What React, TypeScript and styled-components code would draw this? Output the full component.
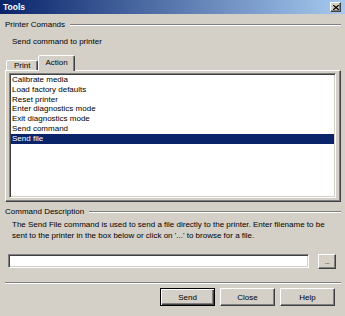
import React from "react";
import styled, { createGlobalStyle } from "styled-components";

const GlobalStyle = createGlobalStyle`
  html, body {
    margin: 0;
    padding: 0;
    background: #d4d0c8;
  }

  body {
    font-family: "Liberation Sans", Arial, sans-serif;
    font-size: 8px;
    color: #000;
  }

  * {
    box-sizing: border-box;
  }
`;

const commands = [
    "Calibrate media",
    "Load factory defaults",
    "Reset printer",
    "Enter diagnostics mode",
    "Exit diagnostics mode",
    "Send command",
    "Send file",
];

export default function App() {
    const selected = "Send file";

    return (
        <Window>
            <GlobalStyle />
            <TitleBar>
                <Title>Tools</Title>
                <CloseBox>
                    <svg width="6" height="5" viewBox="0 0 6 5">
                        <path d="M0 0 L6 5 M6 0 L0 5" stroke="#000" strokeWidth="1.3" />
                    </svg>
                </CloseBox>
            </TitleBar>

            <Content>
                <GroupHeader>
                    <span>Printer Comands</span>
                    <Etch />
                </GroupHeader>
                <Subtitle>Send command to printer</Subtitle>

                <TabStrip>
                    <Tab>Print</Tab>
                    <Tab $active>Action</Tab>
                </TabStrip>
                <TabPanel>
                    <ListBox>
                        {commands.map((c) => (
                            <ListItem key={c} $selected={c === selected}>
                                {c}
                            </ListItem>
                        ))}
                    </ListBox>
                </TabPanel>

                <DescHeader>
                    <span>Command Description</span>
                    <Etch />
                </DescHeader>
                <Description>
                    The Send File command is used to send a file directly to the printer. Enter filename to be
                    <br />
                    sent to the printer in the box below or click on '...' to browse for a file.
                </Description>

                <FileRow>
                    <FileInput />
                    <BrowseButton>...</BrowseButton>
                </FileRow>

                <Separator />

                <ButtonRow>
                    <Button $default>Send</Button>
                    <Button>Close</Button>
                    <Button>Help</Button>
                </ButtonRow>
            </Content>
        </Window>
    );
}

const Window = styled.div`
    width: 345px;
    height: 316px;

    display: flex;
    flex-direction: column;

    overflow: hidden;
    background: #d4d0c8;
`;

const TitleBar = styled.div`
    height: 14px;

    display: flex;
    align-items: center;
    justify-content: space-between;

    padding: 0 4px 0 3px;
    background: linear-gradient(to right, #0a246a, #a6caf0);
`;

const Title = styled.span`
    color: #fff;
    font-size: 8.5px;
    font-weight: 700;
    line-height: 100%;
`;

const CloseBox = styled.div`
    width: 11px;
    height: 10px;

    display: flex;
    align-items: center;
    justify-content: center;

    background: #d4d0c8;
    border: 1px solid;
    border-color: #fff #404040 #404040 #fff;
    box-shadow: inset -1px -1px #808080;
`;

const Content = styled.div`
    flex: 1;

    display: flex;
    flex-direction: column;

    padding: 6px 4px 0 5px;
`;

const GroupHeader = styled.div`
    height: 10px;

    display: flex;
    align-items: center;
    gap: 5px;

    line-height: 10px;
    white-space: nowrap;
`;

const DescHeader = styled(GroupHeader)`
    margin-top: 5px;
`;

const Etch = styled.div`
    flex: 1;
    height: 0;

    border-top: 1px solid #808080;
    border-bottom: 1px solid #fff;
`;

const Subtitle = styled.div`
    margin: 7px 0 0 7px;
    line-height: 10px;
`;

const TabStrip = styled.div`
    display: flex;
    align-items: flex-end;

    margin-top: 8px;
    padding-left: 1px;
`;

const Tab = styled.div<{ $active?: boolean }>`
    position: relative;
    z-index: ${(p) => (p.$active ? 1 : 0)};

    height: ${(p) => (p.$active ? "16px" : "10px")};
    margin-bottom: ${(p) => (p.$active ? "-1px" : "0")};
    padding: ${(p) => (p.$active ? "1px 6px 0" : "0 7px")};

    line-height: ${(p) => (p.$active ? "12px" : "10px")};

    background: #d4d0c8;
    border: 1px solid;
    border-bottom: none;
    border-color: #fff #404040 transparent #fff;
    border-radius: 2px 2px 0 0;
    box-shadow: inset -1px 0 #808080;
`;

const TabPanel = styled.div`
    padding: 2px 4px 3px 3px;

    border: 1px solid;
    border-color: #fff #404040 #404040 #fff;
    box-shadow: inset -1px -1px #808080;
`;

const ListBox = styled.div`
    height: 125px;

    display: flex;
    flex-direction: column;

    background: #fff;
    border: 1px solid;
    border-color: #808080 #fff #fff #808080;
    box-shadow: inset 1px 1px #404040, inset -1px -1px #d4d0c8;
    padding: 1px;
`;

const ListItem = styled.div<{ $selected?: boolean }>`
    height: 9.8px;
    padding-left: 1px;

    line-height: 9.8px;
    white-space: nowrap;

    color: ${(p) => (p.$selected ? "#fff" : "#000")};
    background: ${(p) => (p.$selected ? "#0a246a" : "transparent")};
`;

const Description = styled.div`
    margin: 2px 0 0 7px;

    line-height: 11px;
    white-space: nowrap;
`;

const FileRow = styled.div`
    display: flex;
    align-items: flex-start;
    gap: 9px;

    margin: 13px 0 0 3px;
`;

const FileInput = styled.div`
    width: 301px;
    height: 14px;

    background: #fff;
    border: 1px solid;
    border-color: #808080 #fff #fff #808080;
    box-shadow: inset 1px 1px #404040, inset -1px -1px #d4d0c8;
`;

const BrowseButton = styled.div`
    width: 18px;
    height: 15px;

    display: flex;
    align-items: flex-end;
    justify-content: center;

    padding-bottom: 2px;
    color: #404040;
    font-size: 8px;
    line-height: 8px;
    letter-spacing: -0.5px;

    background: #d4d0c8;
    border: 1px solid;
    border-color: #fff #404040 #404040 #fff;
    box-shadow: inset -1px -1px #808080;
`;

const Separator = styled.div`
    margin-top: 13px;

    border-top: 1px solid #808080;
    border-bottom: 1px solid #fff;
`;

const ButtonRow = styled.div`
    display: flex;
    justify-content: flex-end;
    gap: 5px;

    margin-top: 4px;
    padding-right: 6px;
`;

const Button = styled.div<{ $default?: boolean }>`
    width: 55px;
    height: 18px;

    display: flex;
    align-items: center;
    justify-content: center;

    background: #d4d0c8;
    border: 1px solid;
    border-color: ${(p) => (p.$default ? "#000" : "#fff #404040 #404040 #fff")};
    box-shadow: ${(p) =>
        p.$default
            ? "inset 1px 1px #fff, inset -1px -1px #404040, inset -2px -2px #808080"
            : "inset -1px -1px #808080"};
`;
